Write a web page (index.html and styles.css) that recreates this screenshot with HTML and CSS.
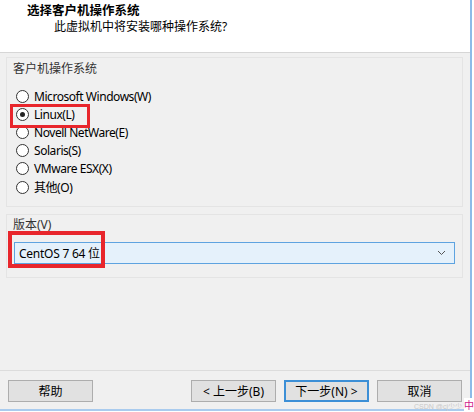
FILE: index.html
```html
<!DOCTYPE html>
<html lang="zh-CN">
<head>
    <meta charset="UTF-8">
    <title>新建虚拟机向导</title>
    <link rel="stylesheet" href="styles.css">
</head>
<body>

    <div class="dialog">
        <div class="header">
            <div class="title">选择客户机操作系统</div>
            <div class="subtitle">此虚拟机中将安装哪种操作系统?</div>
        </div>

        <div class="content">
            <div class="group group-os">
                <div class="group-label">客户机操作系统</div>
                <ul class="radios">
                    <li><span class="radio"></span>Microsoft Windows(W)</li>
                    <li><span class="radio checked"></span>Linux(L)</li>
                    <li><span class="radio"></span>Novell NetWare(E)</li>
                    <li><span class="radio"></span>Solaris(S)</li>
                    <li><span class="radio"></span>VMware ESX(X)</li>
                    <li><span class="radio"></span>其他(O)</li>
                </ul>
            </div>

            <div class="group group-version">
                <div class="group-label">版本(V)</div>
                <div class="select">
                    <span>CentOS 7 64 位</span>
                    <svg class="chevron" width="9" height="6" viewBox="0 0 9 6">
                        <path d="M1 1 L4.5 4.5 L8 1" fill="none" stroke="#555" stroke-width="1"/>
                    </svg>
                </div>
            </div>
        </div>

        <div class="footer">
            <button class="btn" type="button">帮助</button>
            <div class="spacer"></div>
            <button class="btn" type="button">&lt; 上一步(B)</button>
            <button class="btn btn-default" type="button">下一步(N) &gt;</button>
            <button class="btn" type="button">取消</button>
        </div>

        <!-- red marks drawn over the screenshot -->
        <div class="mark mark-linux"></div>
        <div class="mark mark-version"></div>
    </div>

    <div class="watermark">CSDN @cj少少</div>
    <div class="ime">中</div>

</body>
</html>
```

FILE: styles.css
```css
body{
    margin: 0;
    background: #ffffff;
    font-family: "Noto Sans", "Noto Sans CJK SC", sans-serif;
    font-size: 12px;
    color: #000;
    position: relative;
    width: 474px;
    height: 412px;
    overflow: hidden;
}

.dialog{
    position: relative;
    width: 470px;
    height: 409px;
    background: #f0f0f0;
    border-right: 2px solid #8dbbe8;
    border-bottom: 2px solid #a9cbee;
    display: flex;
    flex-direction: column;
}

.header{
    height: 53px;
    background: #ffffff;
    border-bottom: 1px solid #d6d6d6;
    box-sizing: border-box;
}

.title{
    font-weight: bold;
    margin: 3px 0 0 27px;
    line-height: 16px;
    font-size: 12.5px;
}

.subtitle{
    margin: 0 0 0 54px;
    line-height: 16px;
}

.content{
    padding: 4px 6px 0 6px;
}

.group{
    border: 1px solid #e4e4e4;
    width: 457px;
    box-sizing: border-box;
}

.group-label{
    color: #333;
    line-height: 16px;
    padding-left: 6px;
}

.group-os{
    height: 150px;
    padding-top: 3px;
}

.radios{
    list-style: none;
    margin: 10px 0 0 0;
    padding: 0 0 0 9px;
    letter-spacing: -0.45px;
}

.radios li{
    height: 18.2px;
    display: flex;
    align-items: center;
}

.radio{
    width: 11px;
    height: 11px;
    border: 1px solid #333;
    border-radius: 50%;
    background: #fff;
    margin-right: 5px;
    position: relative;
}

.radio.checked::after{
    content: "";
    position: absolute;
    left: 3px;
    top: 3px;
    width: 5px;
    height: 5px;
    border-radius: 50%;
    background: #222;
}

.group-version{
    margin-top: 7px;
    height: 64px;
    padding-top: 2px;
}

.select{
    margin: 9px 0 0 7px;
    width: 441px;
    height: 22px;
    box-sizing: border-box;
    border: 1px solid #5ea3e0;
    background: #e5f1fb;
    display: flex;
    align-items: center;
    justify-content: space-between;
    padding: 0 8px 0 4px;
    letter-spacing: -0.25px;
}

.footer{
    margin-top: auto;
    border-top: 1px solid #dcdcdc;
    height: 39px;
    box-sizing: border-box;
    display: flex;
    align-items: flex-start;
    padding: 9px 8px 0 8px;
    gap: 8px;
}

.spacer{
    flex: 1;
}

.btn{
    width: 85px;
    height: 22px;
    border: 1px solid #adadad;
    background: #e1e1e1;
    font-family: "Noto Sans", "Noto Sans CJK SC", sans-serif;
    font-size: 12px;
    padding: 0;
    color: #000;
}

.btn-default{
    border: 2px solid #3c8fd6;
}

.mark{
    position: absolute;
    border: 3px solid #e8262c;
    box-sizing: border-box;
}

.mark-linux{
    left: 10px;
    top: 104px;
    width: 80px;
    height: 24px;
}

.mark-version{
    left: 8px;
    top: 231px;
    width: 97px;
    height: 37px;
    border-width: 4px;
}

.watermark{
    position: absolute;
    right: 12px;
    bottom: 1px;
    font-size: 7px;
    color: #c8c8c8;
    font-family: "Liberation Sans", sans-serif;
}

.ime{
    position: absolute;
    right: 0;
    bottom: 0;
    width: 10px;
    height: 14px;
    background: #fff;
    color: #d0208a;
    font-size: 10px;
    line-height: 14px;
    text-align: center;
    font-family: "Noto Sans CJK SC", sans-serif;
}
```
